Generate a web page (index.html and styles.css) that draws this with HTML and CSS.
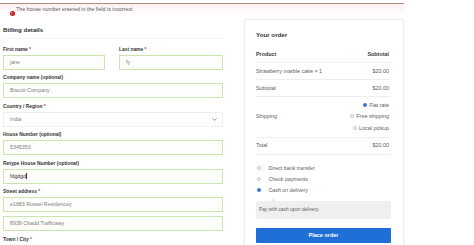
FILE: index.html
```html
<!DOCTYPE html>
<html lang="en">
<head>
    <meta charset="UTF-8">
    <meta name="viewport" content="width=device-width, initial-scale=1.0">
    <title>Checkout</title>
    <link rel="stylesheet" href="styles.css">
</head>
<body>

    <div class="page">
        <!-- Aviso de erro -->
        <div class="notice">
            <span class="notice-icon">!</span>
            The house number entered in the field is incorrect
        </div>

        <div class="checkout">
            <!-- Coluna de cobrança -->
            <div class="billing">
                <h3>Billing details</h3>

                <div class="pair">
                    <div class="field">
                        <label>First name <span class="req">*</span></label>
                        <div class="input ok">jane</div>
                    </div>
                    <div class="field">
                        <label>Last name <span class="req">*</span></label>
                        <div class="input ok">fy</div>
                    </div>
                </div>

                <div class="field">
                    <label>Company name (optional)</label>
                    <div class="input ok">Biscuit Company</div>
                </div>

                <div class="field">
                    <label>Country / Region <span class="req">*</span></label>
                    <div class="input select">
                        <span>India</span>
                        <svg width="5" height="3" viewBox="0 0 5 3"><path d="M0.5 0.5 L2.5 2.4 L4.5 0.5" fill="none" stroke="#666" stroke-width="0.7"/></svg>
                    </div>
                </div>

                <div class="field">
                    <label>House Number (optional)</label>
                    <div class="input ok">5345353</div>
                </div>

                <div class="field">
                    <label>Retype House Number (optional)</label>
                    <div class="input ok dark">fdgdgd<span class="caret"></span></div>
                </div>

                <div class="field">
                    <label>Street address <span class="req">*</span></label>
                    <div class="input ok">e1683 Russel Residencey</div>
                    <div class="input ok second">8939 Chadd Trafficway</div>
                </div>

                <div class="field">
                    <label>Town / City <span class="req">*</span></label>
                </div>
            </div>

            <!-- Resumo do pedido -->
            <div class="order-card">
                <h3>Your order</h3>

                <table class="order-table">
                    <tr class="head">
                        <td>Product</td>
                        <td class="right">Subtotal</td>
                    </tr>
                    <tr>
                        <td>Strawberry marble cake &times; 1</td>
                        <td class="right">$20.00</td>
                    </tr>
                    <tr>
                        <td>Subtotal</td>
                        <td class="right">$20.00</td>
                    </tr>
                    <tr class="shipping">
                        <td>Shipping</td>
                        <td class="right">
                            <div class="ship-opt"><span class="radio on"></span>Flat rate</div>
                            <div class="ship-opt"><span class="radio"></span>Free shipping</div>
                            <div class="ship-opt"><span class="radio"></span>Local pickup</div>
                        </td>
                    </tr>
                    <tr>
                        <td>Total</td>
                        <td class="right">$20.00</td>
                    </tr>
                </table>

                <div class="payments">
                    <div class="pay-opt"><span class="radio"></span>Direct bank transfer</div>
                    <div class="pay-opt"><span class="radio"></span>Check payments</div>
                    <div class="pay-opt"><span class="radio on"></span>Cash on delivery</div>
                    <div class="pay-box">Pay with cash upon delivery.</div>
                </div>

                <button class="place-order">Place order</button>
            </div>
        </div>
    </div>

</body>
</html>
```

FILE: styles.css
```css
/* Geral */
body {
    margin: 0;
    font-family: "Liberation Sans", Arial, sans-serif;
    background: #fff;
    color: #555;
}

.page {
    width: 404px;
    padding-top: 3px;
}

/* Aviso de erro */
.notice {
    position: relative;
    border-top: 1.5px solid #b58884;
    background: linear-gradient(#fbf1f1, #fff);
    padding: 1.5px 0 4.5px 16px;
    font-size: 5.3px;
    line-height: 6px;
    color: #5a5a5a;
}

.notice-icon {
    position: absolute;
    left: 9.5px;
    top: 7px;
    width: 5px;
    height: 5px;
    border-radius: 50%;
    background: #c8171e;
    color: #fff;
    font-size: 4px;
    line-height: 5px;
    font-weight: bold;
    text-align: center;
}

.checkout {
    display: flex;
    align-items: flex-start;
    justify-content: space-between;
    margin-top: 3px;
}

/* Coluna de cobrança */
.billing {
    width: 220px;
    margin-left: 3px;
}

.billing h3 {
    margin: 7px 0 8px;
    font-size: 6.2px;
    line-height: 8px;
    color: #2e2e2e;
    padding-bottom: 3.5px;
    border-bottom: 1px solid #f3f3f3;
}

.pair {
    display: flex;
    justify-content: space-between;
}

.pair .field {
    width: 102px;
}

.pair .field + .field {
    width: 104px;
}

.field label {
    display: block;
    font-size: 4.9px;
    line-height: 6px;
    font-weight: bold;
    color: #333;
    margin-bottom: 2px;
}

.req {
    color: #c0392b;
}

.input {
    box-sizing: border-box;
    height: 15px;
    border: 1px solid #eeeeee;
    padding: 0 6px;
    font-size: 5.3px;
    line-height: 13px;
    color: #7e7e7e;
    margin-bottom: 5.6px;
    background: #fff;
}

.input.ok {
    border-color: #cce3b2;
    background: #fdfdfb;
}

.input.dark {
    color: #2e2e2e;
}

.caret {
    display: inline-block;
    width: 0.5px;
    height: 6px;
    background: #333;
    vertical-align: -1px;
}

.field .input + .input.second {
    margin-top: -1.6px;
}

.input.select {
    display: flex;
    justify-content: space-between;
    align-items: center;
    padding-right: 5px;
}

/* Cartão do pedido */
.order-card {
    box-sizing: border-box;
    width: 160px;
    height: 240px;
    padding: 10px 12px 0 11px;
    border: 1px solid #ececec;
    box-shadow: 0 0 3px rgba(0, 0, 0, 0.05);
    background: #fff;
}

.order-card h3 {
    margin: 0 0 6px;
    font-size: 6.2px;
    line-height: 10px;
    color: #2e2e2e;
}

.order-table {
    width: 100%;
    border-collapse: collapse;
    font-size: 5.4px;
    line-height: 7px;
    color: #5e5e5e;
}

.order-table td {
    padding: 4.5px 0;
    border-bottom: 1px solid #eeeeee;
}

.order-table td.right {
    text-align: right;
    padding-right: 2px;
}

.order-table .head td {
    color: #3a3a3a;
    font-weight: bold;
}

.order-table .shipping td {
    padding-top: 2.5px;
    padding-bottom: 2.5px;
}

.ship-opt {
    line-height: 11.5px;
}

.radio {
    display: inline-block;
    box-sizing: border-box;
    width: 4px;
    height: 4px;
    border: 0.6px solid #c4c4c4;
    border-radius: 50%;
    margin-right: 2px;
    vertical-align: 0;
}

.radio.on {
    border: none;
    background: #3a78d8;
}

/* Formas de pagamento */
.payments {
    margin-top: 8px;
    font-size: 5.3px;
    color: #5e5e5e;
}

.pay-opt {
    line-height: 11px;
    padding-left: 1px;
}

.pay-opt .radio {
    margin-right: 7.5px;
}

.pay-box {
    position: relative;
    margin-top: 5px;
    height: 18px;
    box-sizing: border-box;
    padding-left: 3px;
    background: #efefef;
    border-radius: 2px;
    font-size: 4.8px;
    line-height: 18px;
    color: #5e5e5e;
}

.pay-box::before {
    content: "";
    position: absolute;
    left: 14px;
    top: -3px;
    border-left: 3px solid transparent;
    border-right: 3px solid transparent;
    border-bottom: 3px solid #efefef;
}

.place-order {
    display: block;
    width: 100%;
    height: 15px;
    margin-top: 9px;
    border: none;
    border-radius: 1px;
    background: #1f6fd6;
    color: #fff;
    font-family: "Liberation Sans", Arial, sans-serif;
    font-size: 5.5px;
    font-weight: bold;
    padding: 0;
}
```
